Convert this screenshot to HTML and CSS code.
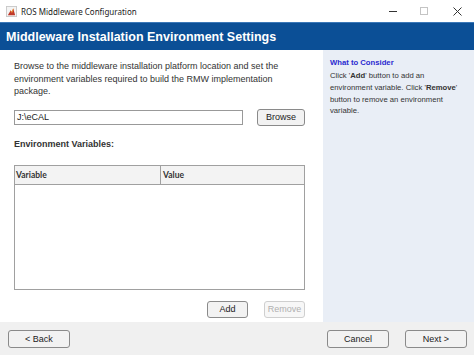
FILE: index.html
```html
<!DOCTYPE html>
<html>
<head>
<meta charset="utf-8">
<link rel="stylesheet" href="styles.css">
</head>
<body>
<div class="window">
  <div class="titlebar">
    <svg class="appicon" width="11" height="11" viewBox="0 0 12 12">
      <rect x="0.5" y="0.5" width="11" height="11" fill="#f4f4f4" stroke="#c8c8c8"/>
      <path d="M2 10 L5 5 L6.5 7 L8 3 L10 10 Z" fill="#c0392b"/>
      <path d="M5 5 L6.5 7 L8 3" fill="none" stroke="#e67e22" stroke-width="1"/>
    </svg>
    <span class="title">ROS Middleware Configuration</span>
    <div class="controls">
      <svg class="ctl min" width="8" height="8" viewBox="0 0 8 8"><path d="M0 4.5 H8" stroke="#333" stroke-width="1"/></svg>
      <svg class="ctl max" width="8" height="8" viewBox="0 0 8 8"><rect x="0.5" y="0.5" width="7" height="7" fill="none" stroke="#c4c4c4"/></svg>
      <svg class="ctl close" width="9" height="9" viewBox="0 0 9 9"><path d="M0.5 0.5 L8.5 8.5 M8.5 0.5 L0.5 8.5" stroke="#333" stroke-width="1"/></svg>
    </div>
  </div>
  <div class="header">Middleware Installation Environment Settings</div>
  <div class="main">
    <div class="content">
      <p class="intro">Browse to the middleware installation platform location and set the environment variables required to build the RMW implementation package.</p>
      <div class="pathrow">
        <div class="input">J:\eCAL</div>
        <button class="btn browse">Browse</button>
      </div>
      <div class="envlabel">Environment Variables:</div>
      <div class="table">
        <div class="thead">
          <div class="th col1">Variable</div>
          <div class="th col2">Value</div>
        </div>
        <div class="tbody"></div>
      </div>
      <div class="tablebtns">
        <button class="btn small">Add</button>
        <button class="btn small disabled">Remove</button>
      </div>
    </div>
    <div class="side">
      <div class="side-title">What to Consider</div>
      <p class="side-text">Click '<b>Add</b>' button to add an environment variable. Click '<b>Remove</b>' button to remove an environment variable.</p>
    </div>
  </div>
  <div class="footer">
    <button class="btn nav">&lt; Back</button>
    <div class="spacer"></div>
    <button class="btn nav">Cancel</button>
    <button class="btn nav">Next &gt;</button>
  </div>
</div>
</body>
</html>
```
FILE: styles.css
```css
* { box-sizing: border-box; }
html, body { margin: 0; padding: 0; }
body {
  width: 474px;
  height: 355px;
  overflow: hidden;
  font-family: "Liberation Sans", Arial, sans-serif;
  background: #fff;
}
.window {
  width: 474px;
  height: 355px;
  display: flex;
  flex-direction: column;
}
.titlebar {
  height: 22px;
  flex: none;
  display: flex;
  align-items: center;
  padding-left: 6px;
  background: #fff;
}
.appicon { flex: none; }
.title {
  margin-left: 4px;
  font-family: "Noto Sans", "Open Sans", sans-serif;
  font-size: 8px;
  color: #222;
}
.controls {
  margin-left: auto;
  display: flex;
  align-items: center;
  height: 100%;
}
.ctl { flex: none; }
.min { margin-right: 23px; }
.max { margin-right: 25px; }
.close { margin-right: 12px; }
.header {
  height: 28px;
  flex: none;
  background: #0b4f96;
  border-top: 1px solid #3b78b8;
  color: #fff;
  font-weight: bold;
  font-size: 12.5px;
  padding-left: 6px;
  display: flex;
  align-items: center;
}
.main {
  flex: 1;
  display: flex;
  min-height: 0;
}
.content {
  width: 323px;
  flex: none;
  padding: 10px 0 0 14px;
  display: flex;
  flex-direction: column;
}
.intro {
  margin: 0;
  font-size: 9px;
  line-height: 12.5px;
  color: #333;
  width: 285px;
}
.pathrow {
  margin-top: 11px;
  display: flex;
  align-items: center;
  width: 291px;
}
.input {
  width: 229px;
  height: 15px;
  border: 1px solid #999;
  font-size: 9px;
  line-height: 13px;
  padding-left: 2px;
  color: #222;
}
.btn {
  font-family: "Liberation Sans", Arial, sans-serif;
  background: #f2f2f2;
  border: 1px solid #8a8a8a;
  border-radius: 3px;
  color: #222;
  font-size: 9px;
  padding: 0;
}
.browse {
  margin-left: auto;
  width: 48px;
  height: 17px;
}
.envlabel {
  margin-top: 13px;
  font-weight: bold;
  font-size: 9px;
  color: #333;
}
.table {
  margin-top: 16px;
  width: 291px;
  height: 125px;
  border: 1px solid #a0a0a0;
  display: flex;
  flex-direction: column;
}
.thead {
  height: 19px;
  flex: none;
  display: flex;
  background: #f3f3f3;
  border-bottom: 1px solid #a0a0a0;
}
.th {
  font-family: "Lato", "Noto Sans", sans-serif;
  font-weight: bold;
  font-size: 8.5px;
  color: #333;
  display: flex;
  align-items: center;
  padding-left: 1px;
}
.col1 { width: 146px; border-right: 1px solid #a0a0a0; }
.col2 { flex: 1; padding-left: 2px; }
.tbody { flex: 1; background: #fff; }
.tablebtns {
  margin-top: 11px;
  width: 291px;
  display: flex;
  justify-content: flex-end;
  gap: 16px;
}
.small {
  width: 41px;
  height: 17px;
}
.disabled {
  color: #b0b0b0;
  border-color: #cfcfcf;
  background: #f7f7f7;
}
.side {
  flex: 1;
  background: #e9eef6;
  padding: 8px 0 0 7px;
}
.side-title {
  color: #2a2ad0;
  font-weight: bold;
  font-size: 7.7px;
}
.side-text {
  margin: 3px 0 0 0;
  font-size: 7.7px;
  line-height: 11.8px;
  color: #333;
  width: 136px;
}
.footer {
  height: 33px;
  flex: none;
  background: #f0f0f0;
  display: flex;
  align-items: center;
  padding: 0 7px 0 8px;
}
.nav {
  width: 62px;
  height: 18px;
}
.spacer { flex: 1; }
.footer .nav + .nav { margin-left: 16px; }
.footer .spacer + .nav { margin-left: 0; }
```
